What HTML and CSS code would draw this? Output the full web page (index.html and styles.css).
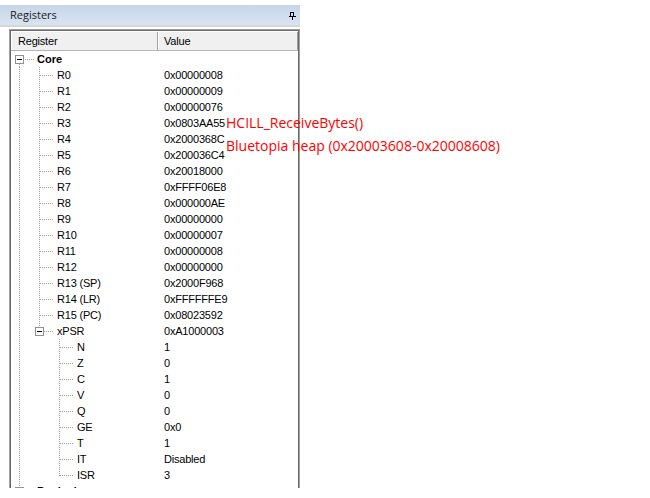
FILE: index.html
```html
<!DOCTYPE html>
<html>
<head>
<meta charset="utf-8">
<link rel="stylesheet" href="styles.css">
</head>
<body>
<div class="page">
  <div class="titlebar">
    <span class="title">Registers</span>
    <svg class="pin" width="7" height="8" viewBox="0 0 7 8">
      <rect x="1.5" y="0.5" width="3" height="4" fill="none" stroke="#000"/>
      <rect x="4" y="0" width="1" height="5" fill="#000"/>
      <rect x="0" y="4" width="7" height="1" fill="#000"/>
      <rect x="3" y="5" width="1" height="3" fill="#000"/>
    </svg>
  </div>
  <div class="sep"></div>
  <div class="frame">
    <div class="inner">
      <div class="header">
        <div class="hcell c1">Register</div>
        <div class="hcell c2">Value</div>
      </div>
      <div class="rows">
        <div class="row t-first"><div class="lbl l0"><span class="exp"></span><b>Core</b></div><div class="val"></div></div>
        <div class="row r1"><div class="lbl l1">R0</div><div class="val">0x00000008</div></div>
        <div class="row r1"><div class="lbl l1">R1</div><div class="val">0x00000009</div></div>
        <div class="row r1"><div class="lbl l1">R2</div><div class="val">0x00000076</div></div>
        <div class="row r1"><div class="lbl l1">R3</div><div class="val">0x0803AA55</div></div>
        <div class="row r1"><div class="lbl l1">R4</div><div class="val">0x2000368C</div></div>
        <div class="row r1"><div class="lbl l1">R5</div><div class="val">0x200036C4</div></div>
        <div class="row r1"><div class="lbl l1">R6</div><div class="val">0x20018000</div></div>
        <div class="row r1"><div class="lbl l1">R7</div><div class="val">0xFFFF06E8</div></div>
        <div class="row r1"><div class="lbl l1">R8</div><div class="val">0x000000AE</div></div>
        <div class="row r1"><div class="lbl l1">R9</div><div class="val">0x00000000</div></div>
        <div class="row r1"><div class="lbl l1">R10</div><div class="val">0x00000007</div></div>
        <div class="row r1"><div class="lbl l1">R11</div><div class="val">0x00000008</div></div>
        <div class="row r1"><div class="lbl l1">R12</div><div class="val">0x00000000</div></div>
        <div class="row r1"><div class="lbl l1">R13 (SP)</div><div class="val">0x2000F968</div></div>
        <div class="row r1"><div class="lbl l1">R14 (LR)</div><div class="val">0xFFFFFFE9</div></div>
        <div class="row r1"><div class="lbl l1">R15 (PC)</div><div class="val">0x08023592</div></div>
        <div class="row r1x"><div class="lbl l1x"><span class="exp"></span>xPSR</div><div class="val">0xA1000003</div></div>
        <div class="row r2"><div class="lbl l2">N</div><div class="val">1</div></div>
        <div class="row r2"><div class="lbl l2">Z</div><div class="val">0</div></div>
        <div class="row r2"><div class="lbl l2">C</div><div class="val">1</div></div>
        <div class="row r2"><div class="lbl l2">V</div><div class="val">0</div></div>
        <div class="row r2"><div class="lbl l2">Q</div><div class="val">0</div></div>
        <div class="row r2"><div class="lbl l2">GE</div><div class="val">0x0</div></div>
        <div class="row r2"><div class="lbl l2">T</div><div class="val">1</div></div>
        <div class="row r2"><div class="lbl l2">IT</div><div class="val">Disabled</div></div>
        <div class="row r2l"><div class="lbl l2">ISR</div><div class="val">3</div></div>
        <div class="row t-next"><div class="lbl l0"><span class="exp plus"></span><b>Banked</b></div><div class="val"></div></div>
      </div>
    </div>
  </div>
</div>
<div class="notes">
  <div class="note">HCILL_ReceiveBytes()</div>
  <div class="note">Bluetopia heap (0x20003608-0x20008608)</div>
</div>
</body>
</html>
```

FILE: styles.css
```css
:root {
  --v: repeating-linear-gradient(to bottom, #a0a0a0 0 1px, transparent 1px 2px);
  --h: repeating-linear-gradient(to right, #a0a0a0 0 1px, transparent 1px 2px);
}
html, body {
  margin: 0;
  padding: 0;
  background: #fff;
  overflow: hidden;
  height: 498px;
}
.page {
  padding-top: 5px;
  width: 300px;
  height: 483px;
  overflow: hidden;
}
.titlebar {
  height: 20px;
  box-sizing: border-box;
  padding: 0 4px 0 10px;
  display: flex;
  align-items: center;
  justify-content: space-between;
  background: linear-gradient(#c6d5e8, #d9e4f1);
}
.title {
  font-family: "Open Sans", "Noto Sans", sans-serif;
  font-size: 11px;
  color: #1b1b1b;
  line-height: 20px;
}
.pin {
  display: block;
  margin-top: 1px;
}
.sep {
  height: 4px;
  background: linear-gradient(#d6d6d6 0 2px, #ffffff 2px 4px);
}
.frame {
  margin-left: 9px;
  width: 291px;
  box-sizing: border-box;
  border: 1px solid #a0a0a0;
  border-bottom: 0;
  height: 470px;
}
.inner {
  border: 1px solid #696969;
  border-bottom: 0;
  height: 100%;
  box-sizing: border-box;
  font-family: "Liberation Sans", Arial, sans-serif;
  font-size: 11px;
  color: #000;
}
.header {
  display: flex;
  height: 20px;
  box-sizing: border-box;
  border-top: 1px solid #ffffff;
  border-bottom: 1px solid #b5b5b5;
  background: #f0f0f0;
}
.hcell {
  box-sizing: border-box;
  line-height: 18px;
  letter-spacing: -0.2px;
}
.c1 {
  width: 147px;
  padding-left: 6px;
  border-left: 1px solid #ffffff;
  border-right: 1px solid #a0a0a0;
}
.c2 {
  flex: 1;
  padding-left: 5px;
  border-left: 1px solid #ffffff;
  border-right: 1px solid #a0a0a0;
}
.row {
  height: 16px;
  display: grid;
  grid-template-columns: 153px 1fr;
  align-items: center;
  background-repeat: no-repeat;
  letter-spacing: -0.2px;
  white-space: nowrap;
}
.lbl {
  display: flex;
  align-items: center;
}
.lbl b {
  font-weight: bold;
  letter-spacing: 0;
}
.l0 { padding-left: 4px; }
.l0 .exp { margin-right: 13px; }
.l1 { padding-left: 46px; }
.l1x { padding-left: 24px; }
.l1x .exp { margin-right: 13px; }
.l2 { padding-left: 66px; }
.exp {
  width: 9px;
  height: 9px;
  box-sizing: border-box;
  border: 1px solid #919191;
  background: #fff;
  display: flex;
  align-items: center;
  justify-content: center;
  flex: none;
}
.exp::before {
  content: "";
  width: 5px;
  height: 1px;
  background: #000;
}
.exp.plus {
  background: linear-gradient(#000, #000) center / 1px 5px no-repeat, #fff;
}
.t-first {
  background-image: var(--v), var(--h);
  background-size: 1px 3px, 10px 1px;
  background-position: 8px 13px, 14px 8px;
}
.r1 {
  background-image: var(--v), var(--v), var(--h);
  background-size: 1px 16px, 1px 16px, 14px 1px;
  background-position: 8px 0, 28px 0, 29px 8px;
}
.r1x {
  background-image: var(--v), var(--v), var(--h);
  background-size: 1px 16px, 1px 4px, 10px 1px;
  background-position: 8px 0, 28px 0, 33px 8px;
}
.r2 {
  background-image: var(--v), var(--v), var(--h);
  background-size: 1px 16px, 1px 16px, 14px 1px;
  background-position: 8px 0, 48px 0, 49px 8px;
}
.r2l {
  background-image: var(--v), var(--v), var(--h);
  background-size: 1px 16px, 1px 9px, 14px 1px;
  background-position: 8px 0, 48px 0, 49px 8px;
}
.t-next {
  background-image: var(--v), var(--h);
  background-size: 1px 4px, 10px 1px;
  background-position: 8px 0, 14px 8px;
}
.notes {
  position: absolute;
  left: 226px;
  top: 111px;
  font-family: "Open Sans", "Noto Sans", sans-serif;
  font-size: 14px;
  line-height: 23px;
  color: #ff0000;
  white-space: nowrap;
}
```
